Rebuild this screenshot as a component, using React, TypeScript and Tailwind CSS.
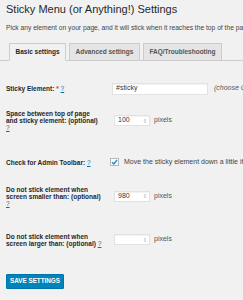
import React from 'react'

const font = { fontFamily: '"Liberation Sans", Arial, sans-serif' }

const Help: React.FC = () => (
  <span className="text-[#0073aa] underline font-normal">?</span>
)

const Spinner: React.FC = () => (
  <svg width="4" height="6" viewBox="0 0 4 6" className="shrink-0">
    <path d="M0.5 2.4 L2 0.8 L3.5 2.4 Z" fill="#c4c4c4" />
    <path d="M0.5 3.6 L2 5.2 L3.5 3.6 Z" fill="#c4c4c4" />
  </svg>
)

const NumberInput: React.FC<{ value?: string }> = ({ value }) => (
  <div className="w-[36px] h-[11px] shrink-0 bg-white border border-[#e2e2e2] shadow-[inset_0_1px_1px_rgba(0,0,0,0.05)] flex items-center justify-between pl-[3px] pr-[2px] text-[7px] text-[#32373c]">
    <span>{value}</span>
    <Spinner />
  </div>
)

const Label: React.FC<{ children: React.ReactNode }> = ({ children }) => (
  <div className="w-[97px] shrink-0 text-[6.5px] leading-[7px] font-bold text-[#23282d]">{children}</div>
)

const App: React.FC = () => {
  return (
    <div className="w-[243px] h-[300px] overflow-hidden bg-[#f1f1f1] pl-[6px]" style={font}>
      <h1 className="pt-[3px] text-[11px] leading-[13px] text-[#23282d] whitespace-nowrap">
        Sticky Menu (or Anything!) Settings
      </h1>
      <p className="mt-[8px] text-[6.7px] leading-[7px] text-[#444] whitespace-nowrap">
        Pick any element on your page, and it will stick when it reaches the top of the page when you scroll down.
      </p>

      <div className="mt-[12px] -ml-[6px] pl-[9px] flex items-end gap-[3px] border-b border-[#ccc]">
        <div className="w-[57px] h-[18px] -mb-px bg-[#f1f1f1] border border-[#ccc] border-b-[#f1f1f1] flex items-center justify-center text-[6.5px] font-bold text-[#23282d]">
          Basic settings
        </div>
        <div className="w-[71px] h-[17px] bg-[#e5e5e5] border border-[#ccc] border-b-0 flex items-center justify-center text-[6.5px] font-bold text-[#555]">
          Advanced settings
        </div>
        <div className="w-[79px] h-[17px] bg-[#e5e5e5] border border-[#ccc] border-b-0 flex items-center justify-center text-[6.5px] font-bold text-[#555]">
          FAQ/Troubleshooting
        </div>
      </div>

      <div className="flex flex-col">
        <div className="mt-[21.5px] flex items-center h-[12px]">
          <Label>
            Sticky Element: <span className="text-[#dc3232]">*</span> <Help />
          </Label>
          <div className="ml-[9px] w-[96px] h-[12px] shrink-0 bg-white border border-[#e2e2e2] shadow-[inset_0_1px_1px_rgba(0,0,0,0.05)] flex items-center pl-[3px] text-[7px] text-[#32373c]">
            #sticky
          </div>
          <span className="ml-[6px] text-[7px] italic text-[#555] whitespace-nowrap">
            (choose ONE element, e.g. header, nav)
          </span>
        </div>

        <div className="mt-[15.5px] flex items-center">
          <Label>
            Space between top of page and sticky element: (optional) <Help />
          </Label>
          <div className="ml-[11px] flex items-center gap-[4px]">
            <NumberInput value="100" />
            <span className="text-[7px] text-[#555]">pixels</span>
          </div>
        </div>

        <div className="mt-[27px] flex items-center h-[8px]">
          <Label>
            Check for Admin Toolbar: <Help />
          </Label>
          <div className="ml-[7px] flex items-center gap-[5px] whitespace-nowrap">
            <div className="w-[9px] h-[8px] shrink-0 bg-white border border-[#b4b9be] flex items-center justify-center">
              <svg width="7" height="6" viewBox="0 0 7 6">
                <path d="M1 3.2 L2.8 5 L6 1" stroke="#1e8cbe" strokeWidth="1.4" fill="none" />
              </svg>
            </div>
            <span className="text-[7px] text-[#444]">Move the sticky element down a little if there is an Administrator Toolbar</span>
          </div>
        </div>

        <div className="mt-[19.5px] flex items-center">
          <Label>
            Do not stick element when screen smaller than: (optional) <Help />
          </Label>
          <div className="ml-[11px] flex items-center gap-[4px]">
            <NumberInput value="980" />
            <span className="text-[7px] text-[#555]">pixels</span>
          </div>
        </div>

        <div className="mt-[26px] flex items-center">
          <Label>
            Do not stick element when screen larger than: (optional) <Help />
          </Label>
          <div className="ml-[11px] flex items-center gap-[4px]">
            <NumberInput />
            <span className="text-[7px] text-[#555]">pixels</span>
          </div>
        </div>

        <div className="mt-[27px]">
          <button className="w-[58px] h-[15px] bg-[#0085ba] border border-[#0073aa] rounded-[1px] text-white text-[6.3px] font-bold uppercase flex items-center justify-center">
            Save Settings
          </button>
        </div>
      </div>
    </div>
  )
}

export default App
